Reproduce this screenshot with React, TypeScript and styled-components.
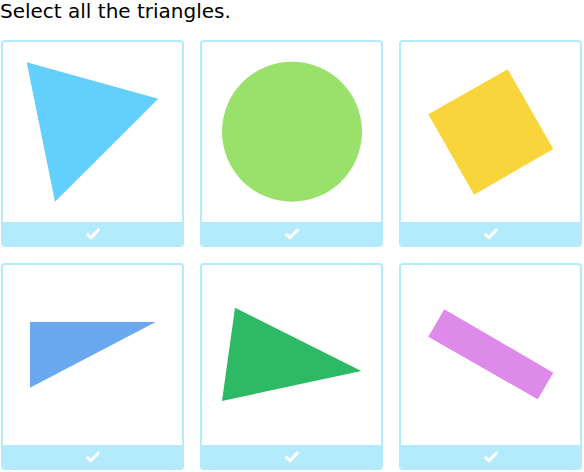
import React from 'react';
import styled, { createGlobalStyle } from 'styled-components';

const GlobalStyle = createGlobalStyle`
  html, body {
    margin: 0;
    padding: 0;
    background: #ffffff;
  }
  body {
    font-family: 'DejaVu Sans', Verdana, sans-serif;
    color: #000000;
  }
`;

const Page = styled.div`
  width: 584px;
  height: 472px;
  overflow: hidden;
`;

const Prompt = styled.h1`
  margin: 0;
  font-size: 20px;
  font-weight: 400;
  line-height: 22px;
`;

const Grid = styled.div`
  display: grid;
  grid-template-columns: repeat(3, 183px);
  grid-auto-rows: 207px;
  column-gap: 16px;
  row-gap: 16px;
  margin-top: 18px;
  padding-left: 1px;
`;

const Card = styled.div`
  display: flex;
  flex-direction: column;
  box-sizing: border-box;
  border: 2px solid #b3ebfd;
  border-radius: 4px;
  background: #ffffff;
  overflow: hidden;
  cursor: pointer;
`;

const CardBody = styled.div`
  flex: 1;
  position: relative;

  svg {
    display: block;
    width: 100%;
    height: 100%;
  }
`;

const CardFooter = styled.div`
  height: 23px;
  background: #b3ebfd;
  display: flex;
  align-items: center;
  justify-content: center;
`;

const Check: React.FC = () => (
  <svg width='14' height='12' viewBox='0 0 14 12'>
    <path
      d='M1.8 6.8 L5 9.6 L12.2 2.2'
      fill='none'
      stroke='#ffffff'
      strokeWidth='3'
      strokeLinecap='square'
      strokeLinejoin='miter'
    />
  </svg>
);

type Shape =
  | { kind: 'poly'; points: string; fill: string }
  | { kind: 'circle'; cx: number; cy: number; r: number; fill: string };

// coordinates are relative to the card's outer corner
const shapes: Shape[] = [
  { kind: 'poly', points: '25.7,22.3 157.3,58.7 54,161.7', fill: '#63cffc' },
  { kind: 'circle', cx: 92, cy: 91.7, r: 70, fill: '#9ae16b' },
  { kind: 'poly', points: '29.3,74.3 108.7,29.3 154.3,109 75,154.7', fill: '#f9d53c' },
  { kind: 'poly', points: '29,59 154.7,59 29,124.7', fill: '#6aa8f0' },
  { kind: 'poly', points: '35,44.7 161.3,108 22,138', fill: '#2eba64' },
  { kind: 'poly', points: '45.3,46.3 154.3,109.7 138.7,136.3 29.3,73.7', fill: '#dd8aea' },
];

const Choice: React.FC<{ shape: Shape }> = ({ shape }) => (
  <Card>
    <CardBody>
      <svg viewBox='2 2 179 180' preserveAspectRatio='none'>
        {shape.kind === 'poly' ? (
          <polygon points={shape.points} fill={shape.fill} />
        ) : (
          <circle cx={shape.cx} cy={shape.cy} r={shape.r} fill={shape.fill} />
        )}
      </svg>
    </CardBody>
    <CardFooter>
      <Check />
    </CardFooter>
  </Card>
);

export default function App() {
  return (
    <Page>
      <GlobalStyle />
      <Prompt>Select all the triangles.</Prompt>
      <Grid>
        {shapes.map((s, i) => (
          <Choice key={i} shape={s} />
        ))}
      </Grid>
    </Page>
  );
}
